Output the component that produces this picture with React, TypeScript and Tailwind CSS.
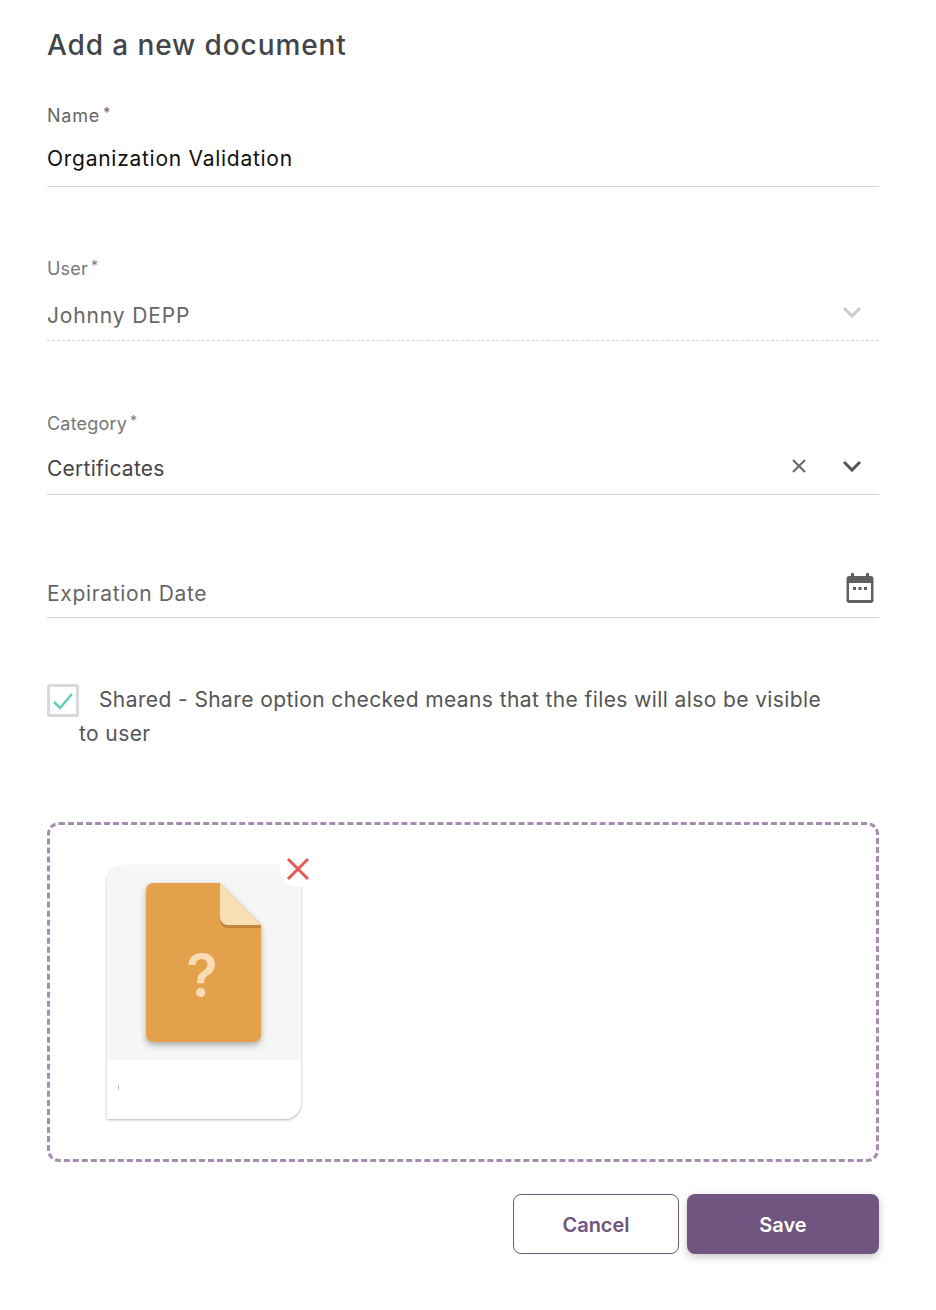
import React from "react";

const font = { fontFamily: '"Inter", "Liberation Sans", sans-serif' };

function Label({ text, tracking = "tracking-[0.2px]", dim = false }: { text: string; tracking?: string; dim?: boolean }) {
  return (
    <div className={`flex h-[22px] items-center text-[18px] ${tracking} ${dim ? "pb-[4px] text-[#777]" : "pb-[2px] text-[#666]"}`}>
      {text}
      <span className="ml-[3px] -mt-[6px] text-[14px]">*</span>
    </div>
  );
}

function Chevron({ color }: { color: string }) {
  return (
    <svg width="20" height="12" viewBox="0 0 20 12" fill="none">
      <path d="M2 2l8 8 8-8" stroke={color} strokeWidth="3" />
    </svg>
  );
}

export default function App() {
  return (
    <div style={font} className="h-[1310px] w-[936px] overflow-hidden bg-white px-[47px] pt-[28px]">
      <div className="w-[832px]">
        <h1 className="h-[34px] text-[28px] font-medium leading-[34px] tracking-[0.9px] text-[#444548]">Add a new document</h1>

        <div className="mt-[43px]">
          <Label text="Name" tracking="tracking-[0.8px]" />
          <div className="flex h-[60px] items-center border-b border-[#d4d4d4] pt-[5px] text-[21px] tracking-[0.73px] text-[#111]">
            Organization Validation
          </div>
        </div>

        <div className="mt-[72px]">
          <Label text="User" dim />
          <div className="flex h-[60px] items-center justify-between border-b border-dashed border-[#d4d4d4] pt-[10px] text-[21px] tracking-[0.85px] text-[#666]">
            <span>Johnny DEPP</span>
            <span className="mb-[8px] mr-[17px] flex"><Chevron color="#ccc" /></span>
          </div>
        </div>

        <div className="mt-[73px]">
          <Label text="Category" dim />
          <div className="flex h-[59px] items-center justify-between border-b border-[#d4d4d4] pt-[8px] text-[21px] tracking-[0.25px] text-[#444]">
            <span>Certificates</span>
            <span className="mb-[6px] mr-[17px] flex items-center gap-[35px]">
              <svg width="16" height="16" viewBox="0 0 16 16" fill="none">
                <path d="M2 2l12 12M14 2L2 14" stroke="#666" strokeWidth="1.9" />
              </svg>
              <Chevron color="#555" />
            </span>
          </div>
        </div>

        <div className="mt-[66px] flex h-[57px] items-end justify-between border-b border-[#d4d4d4] pb-[8px] text-[21px] tracking-[0.65px] text-[#666]">
          <span>Expiration Date</span>
          <span className="mb-[6px] mr-[5px] flex">
            <svg width="28" height="30" viewBox="0 0 28 30" fill="none">
              <rect x="0.5" y="3" width="27" height="27" rx="3" fill="#5f5f5f" />
              <rect x="5" y="0" width="3" height="6" rx="1" fill="#5f5f5f" />
              <rect x="20" y="0" width="3" height="6" rx="1" fill="#5f5f5f" />
              <rect x="3" y="10" width="22" height="17" fill="#fff" />
              <rect x="7" y="14" width="3" height="3" fill="#5f5f5f" />
              <rect x="12.5" y="14" width="3" height="3" fill="#5f5f5f" />
              <rect x="18" y="14" width="3" height="3" fill="#5f5f5f" />
            </svg>
          </span>
        </div>

        <div className="mt-[65px] w-[790px] text-[21px] leading-[33px] tracking-[0.4px] text-[#555]">
          <span className="float-left mr-[20px] mt-[1px] flex h-[33px] w-[32px] items-center justify-center rounded-[3px] border-[3px] border-[#d9d9d9] bg-white">
            <svg width="22" height="18" viewBox="0 0 22 18" fill="none">
              <path d="M2 10l6 6L20 2" stroke="#62cdb8" strokeWidth="2.5" />
            </svg>
          </span>
          <span>Shared - Share option checked means that the files will also be visible</span>
          <span className="mt-[1px] block pl-[32px]">to user</span>
        </div>

        <div className="mt-[72px] h-[340px] rounded-[12px] border-[3px] border-dashed border-[#a48fb0] pl-[57px] pt-[41px]">
          <div className="relative h-[253px] w-[194px] rounded-tl-[16px] rounded-br-[16px] bg-white shadow-[0_1px_3px_rgba(0,0,0,0.3)]">
            <div className="flex h-[194px] justify-center rounded-tl-[16px] bg-[#f6f6f6] pt-[16px]">
              <svg className="overflow-visible" width="116" height="162" viewBox="0 0 116 162" fill="none">
                <path d="M7 1h67l41 42v110a7 7 0 0 1-7 7H7a7 7 0 0 1-7-7V8a7 7 0 0 1 7-7z" fill="#e2a14a" style={{ filter: "drop-shadow(0 3px 3px rgba(0,0,0,0.3))" }} />
                <path d="M74 35a8 8 0 0 0 8 8h33v3H82a8 8 0 0 1-8-8z" fill="#b97f37" opacity="0.8" />
                <path d="M74 1l41 42H82a8 8 0 0 1-8-8z" fill="#fadfb5" />
              </svg>
            </div>
            <span className="pointer-events-none absolute left-[56px] top-[70px] w-[78px] text-center text-[58px] font-semibold leading-[78px] text-[#f9dcb5]">?</span>
            <span className="absolute left-[11px] top-[219px] h-[5px] w-[1px] bg-[#bbb]" />
            <span className="absolute -right-[15px] -top-[15px] flex h-[36px] w-[36px] items-center justify-center rounded-full bg-white">
              <svg width="24" height="24" viewBox="0 0 24 24" fill="none">
                <path d="M2 2l20 20M22 2L2 22" stroke="#e05a56" strokeWidth="3" />
              </svg>
            </span>
          </div>
        </div>

        <div className="mt-[32px] flex justify-end gap-[8px]">
          <button className="h-[60px] w-[166px] rounded-[8px] border border-[#705580] bg-white pt-[2px] text-[20px] font-semibold text-[#705580]">Cancel</button>
          <button className="h-[60px] w-[192px] rounded-[8px] bg-[#705580] pt-[2px] text-[20px] font-semibold text-white shadow-[0_3px_8px_rgba(0,0,0,0.22)]">Save</button>
        </div>
      </div>
    </div>
  );
}
